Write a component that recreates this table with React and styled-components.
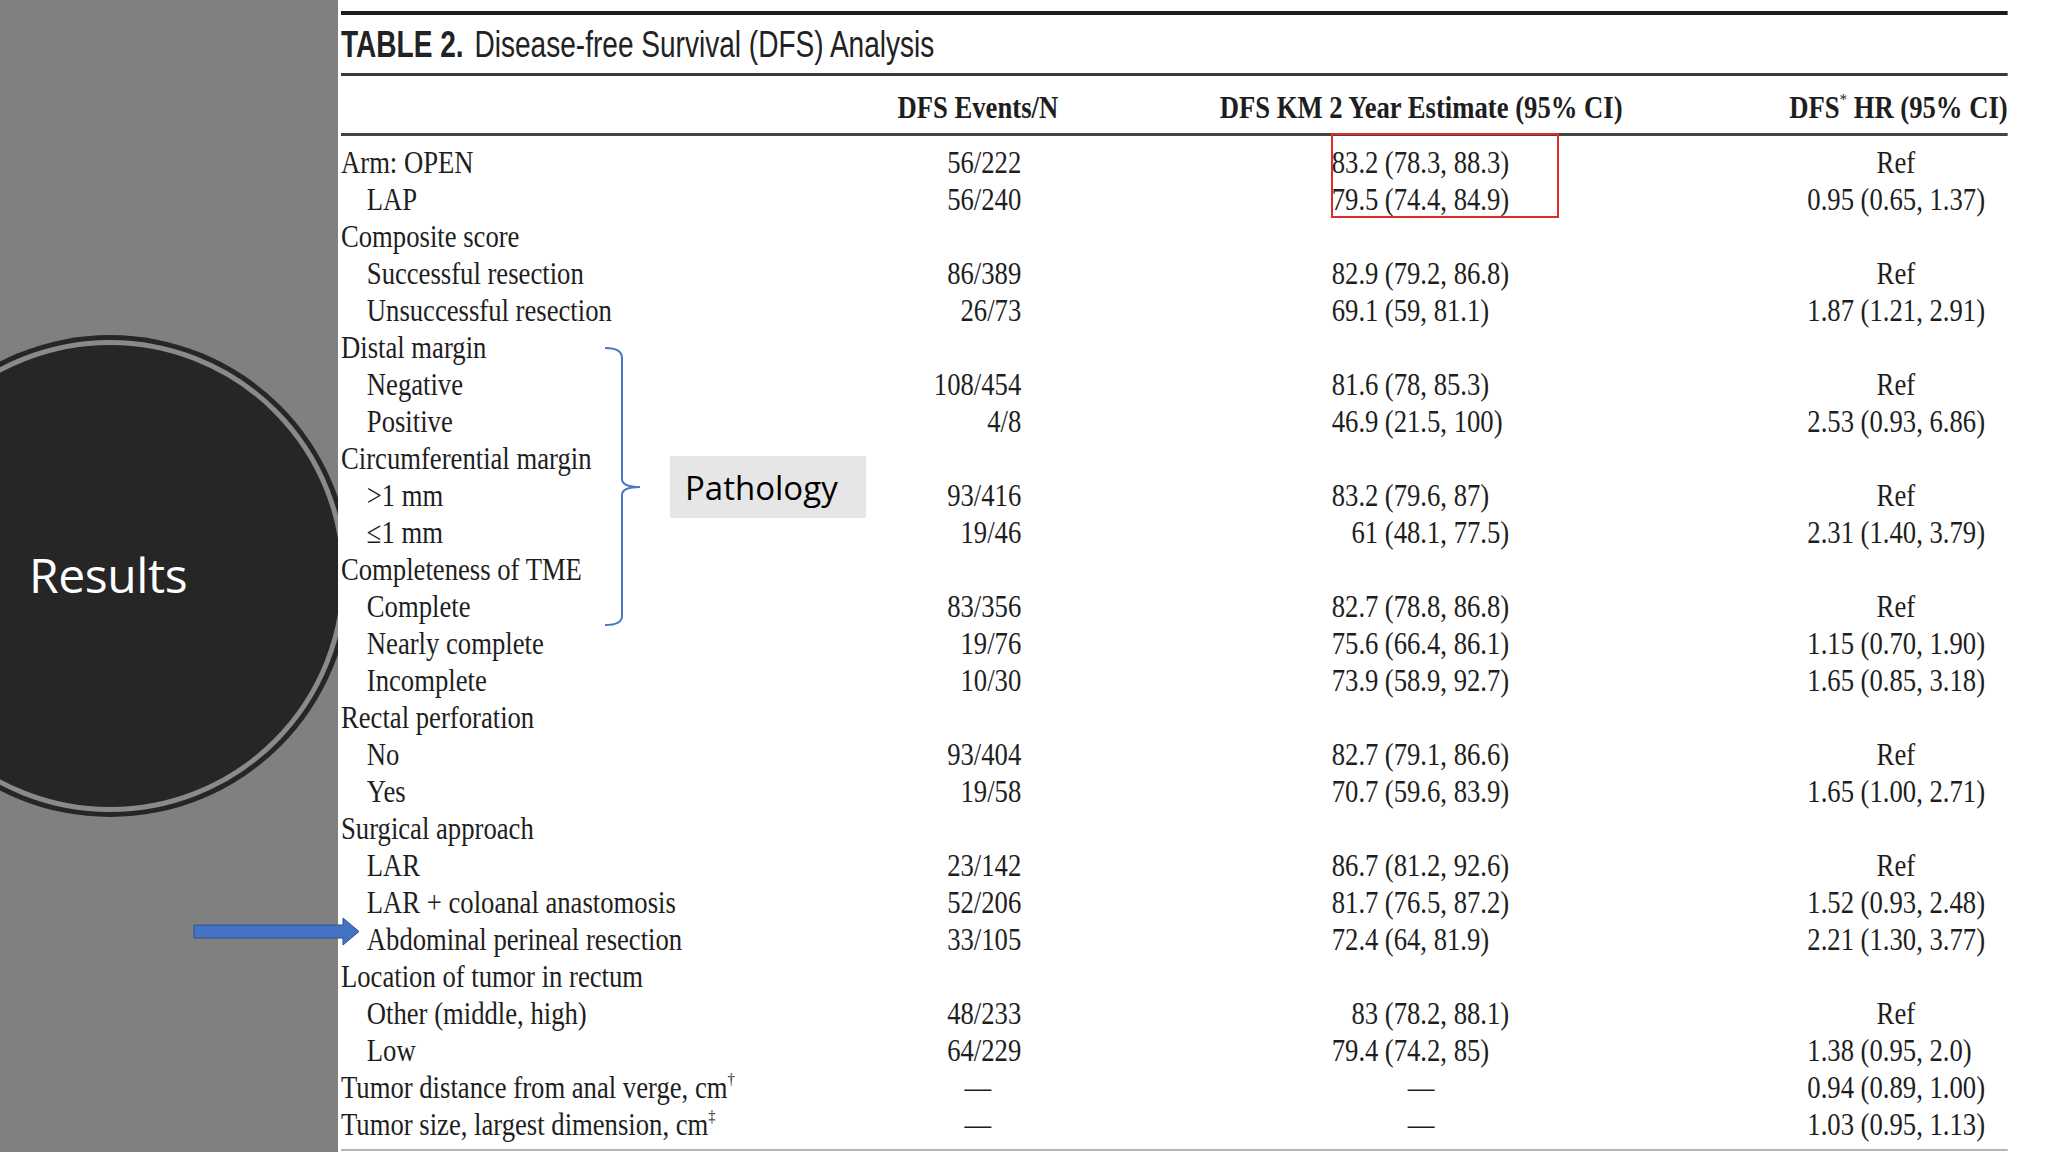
import React from "react";
import styled, { createGlobalStyle } from "styled-components";

// table picture is a squeezed scan: everything inside is laid out at full width and scaled on x
const SQUEEZE = 0.86;

const rows = [
  { label: "Arm: OPEN", events: "56/222", km: ["83.2", "(78.3, 88.3)"], hr: "Ref" },
  { label: "LAP", sub: true, events: "56/240", km: ["79.5", "(74.4, 84.9)"], hr: "0.95 (0.65, 1.37)" },
  { label: "Composite score" },
  { label: "Successful resection", sub: true, events: "86/389", km: ["82.9", "(79.2, 86.8)"], hr: "Ref" },
  { label: "Unsuccessful resection", sub: true, events: "26/73", km: ["69.1", "(59, 81.1)"], hr: "1.87 (1.21, 2.91)" },
  { label: "Distal margin" },
  { label: "Negative", sub: true, events: "108/454", km: ["81.6", "(78, 85.3)"], hr: "Ref" },
  { label: "Positive", sub: true, events: "4/8", km: ["46.9", "(21.5, 100)"], hr: "2.53 (0.93, 6.86)" },
  { label: "Circumferential margin" },
  { label: ">1 mm", sub: true, events: "93/416", km: ["83.2", "(79.6, 87)"], hr: "Ref" },
  { label: "≤1 mm", sub: true, events: "19/46", km: ["61", "(48.1, 77.5)"], hr: "2.31 (1.40, 3.79)" },
  { label: "Completeness of TME" },
  { label: "Complete", sub: true, events: "83/356", km: ["82.7", "(78.8, 86.8)"], hr: "Ref" },
  { label: "Nearly complete", sub: true, events: "19/76", km: ["75.6", "(66.4, 86.1)"], hr: "1.15 (0.70, 1.90)" },
  { label: "Incomplete", sub: true, events: "10/30", km: ["73.9", "(58.9, 92.7)"], hr: "1.65 (0.85, 3.18)" },
  { label: "Rectal perforation" },
  { label: "No", sub: true, events: "93/404", km: ["82.7", "(79.1, 86.6)"], hr: "Ref" },
  { label: "Yes", sub: true, events: "19/58", km: ["70.7", "(59.6, 83.9)"], hr: "1.65 (1.00, 2.71)" },
  { label: "Surgical approach" },
  { label: "LAR", sub: true, events: "23/142", km: ["86.7", "(81.2, 92.6)"], hr: "Ref" },
  { label: "LAR + coloanal anastomosis", sub: true, events: "52/206", km: ["81.7", "(76.5, 87.2)"], hr: "1.52 (0.93, 2.48)" },
  { label: "Abdominal perineal resection", sub: true, events: "33/105", km: ["72.4", "(64, 81.9)"], hr: "2.21 (1.30, 3.77)" },
  { label: "Location of tumor in rectum" },
  { label: "Other (middle, high)", sub: true, events: "48/233", km: ["83", "(78.2, 88.1)"], hr: "Ref" },
  { label: "Low", sub: true, events: "64/229", km: ["79.4", "(74.2, 85)"], hr: "1.38 (0.95, 2.0)" },
  { label: "Tumor distance from anal verge, cm", mark: "†", events: "—", km: "—", hr: "0.94 (0.89, 1.00)" },
  { label: "Tumor size, largest dimension, cm", mark: "‡", events: "—", km: "—", hr: "1.03 (0.95, 1.13)" },
];

export default function App() {
  return (
    <>
      <GlobalStyle />
      <Slide>
        <SidePanel>
          <Badge>
            <BadgeTitle>Results</BadgeTitle>
          </Badge>
        </SidePanel>

        <Sheet>
          <TableScale>
            <Rule $h={4} $color="#1c1c1c" $top={11} />
            <Title>
              <TitleLead>TABLE 2.</TitleLead> Disease-free Survival (DFS) Analysis
            </Title>
            <Rule $h={3} $color="#3a3a3a" $top={8} />
            <HeadRow>
              <HeadCell $col={2} $align="center">DFS Events/N</HeadCell>
              <HeadCell $col={4} $align="center">DFS KM 2 Year Estimate (95% CI)</HeadCell>
              <HeadCell $col={6} $align="right">
                DFS<Sup>*</Sup> HR (95% CI)
              </HeadCell>
            </HeadRow>
            <Rule $h={3} $color="#444" $top={7} />
            <Body>
              {rows.map((r) => (
                <Row key={r.label}>
                  <LabelCell $sub={r.sub}>
                    {r.label}
                    {r.mark && <Sup>{r.mark}</Sup>}
                  </LabelCell>
                  {r.events && <EventsCell $dash={r.events === "—"}>{r.events}</EventsCell>}
                  {r.km &&
                    (Array.isArray(r.km) ? (
                      <KmCell>
                        <Lead>{r.km[0]}</Lead> {r.km[1]}
                      </KmCell>
                    ) : (
                      <KmCell $dash>{r.km}</KmCell>
                    ))}
                  {r.hr && <HrCell $ref={r.hr === "Ref"}>{r.hr}</HrCell>}
                </Row>
              ))}
            </Body>
            <Rule $h={2} $color="#b4b4b4" $top={6} />
          </TableScale>

          <RedBox />
          <Brace width="40" height="282" viewBox="0 0 40 282">
            <path d="M2 2 C12 2 19 4 19 12 L19 133 C19 138 25 141 37 141 C25 141 19 144 19 149 L19 270 C19 277 12 279 2 279" />
          </Brace>
          <Callout>Pathology</Callout>
        </Sheet>

        <Arrow width="170" height="34" viewBox="0 0 170 34">
          <path d="M2 10 H151 V3 L167 16.5 L151 30 V23 H2 Z" />
        </Arrow>
      </Slide>
    </>
  );
}

const GlobalStyle = createGlobalStyle`
  html, body {
    margin: 0;
    padding: 0;
    background: #ffffff;
  }
  body {
    width: 2048px;
    height: 1152px;
    overflow: hidden;
  }
`;

const Slide = styled.div`
  position: relative;
  display: flex;
  width: 2048px;
  height: 1152px;
  overflow: hidden;
`;

const SidePanel = styled.div`
  width: 338px;
  flex-shrink: 0;
  background: #808080;
  display: flex;
  align-items: center;
  overflow: hidden;
`;

const Badge = styled.div`
  box-sizing: border-box;
  flex-shrink: 0;
  width: 472px;
  height: 472px;
  margin-left: -126px;
  padding-left: 150px;
  padding-bottom: 4px;
  border-radius: 50%;
  background: #262626;
  border: 5px solid #8a8a8a;
  box-shadow: 0 0 0 5px #262626;
  display: flex;
  align-items: center;
`;

const BadgeTitle = styled.div`
  font-family: "Open Sans", "Liberation Sans", sans-serif;
  font-size: 48px;
  color: #ffffff;
  letter-spacing: -0.4px;
`;

const Sheet = styled.div`
  position: relative;
  flex: 1;
  min-width: 0;
  background: #ffffff;
  padding-left: 3px;
  overflow: hidden;
`;

const TableScale = styled.div`
  width: 1938px;
  transform: scaleX(${SQUEEZE});
  transform-origin: 0 0;
  color: #1e1e1e;
  font-family: "Liberation Serif", "Times New Roman", serif;
  font-size: 31px;
`;

const Rule = styled.div`
  height: ${(p) => p.$h}px;
  margin-top: ${(p) => p.$top}px;
  background: ${(p) => p.$color};
`;

const Title = styled.div`
  margin-top: 10px;
  height: 40px;
  line-height: 40px;
  font-family: "Liberation Sans", Arial, sans-serif;
  font-size: 36px;
  color: #222;
  white-space: nowrap;
  transform: scaleX(0.906);
  transform-origin: 0 0;
`;

const TitleLead = styled.span`
  font-weight: 700;
  margin-right: 4px;
`;

const grid = `
  display: grid;
  grid-template-columns: 647px 187px 185px 474px 185px 260px;
  height: 37px;
  line-height: 37px;
  white-space: nowrap;
`;

const HeadRow = styled.div`
  ${grid}
  margin-top: 13px;
  font-weight: 700;
`;

const HeadCell = styled.div`
  grid-column: ${(p) => p.$col};
  text-align: ${(p) => p.$align};
`;

const Body = styled.div`
  margin-top: 8px;
`;

const Row = styled.div`
  ${grid}
`;

const LabelCell = styled.div`
  grid-column: 1;
  padding-left: ${(p) => (p.$sub ? 30 : 0)}px;
`;

const EventsCell = styled.div`
  grid-column: 2;
  text-align: ${(p) => (p.$dash ? "center" : "right")};
  padding-right: ${(p) => (p.$dash ? 0 : 43)}px;
`;

const KmCell = styled.div`
  grid-column: 4;
  text-align: ${(p) => (p.$dash ? "center" : "left")};
  padding-left: ${(p) => (p.$dash ? 0 : 133)}px;
`;

const Lead = styled.span`
  display: inline-block;
  width: 54px;
  text-align: right;
`;

const HrCell = styled.div`
  grid-column: 6;
  text-align: ${(p) => (p.$ref ? "center" : "left")};
  padding-left: ${(p) => (p.$ref ? 0 : 27)}px;
`;

const Sup = styled.sup`
  font-size: 0.55em;
  line-height: 0;
  vertical-align: 0.75em;
  font-weight: 400;
`;

const RedBox = styled.div`
  position: absolute;
  left: 993px;
  top: 133px;
  width: 228px;
  height: 85px;
  box-sizing: border-box;
  border: 2px solid #e22a2a;
`;

const Brace = styled.svg`
  position: absolute;
  left: 265px;
  top: 346px;
  fill: none;
  stroke: #4a76c6;
  stroke-width: 2;
`;

const Callout = styled.div`
  position: absolute;
  left: 332px;
  top: 456px;
  width: 196px;
  height: 62px;
  box-sizing: border-box;
  padding-left: 15px;
  display: flex;
  align-items: center;
  background: #e7e6e6;
  color: #000;
  font-family: "Open Sans", "Liberation Sans", sans-serif;
  font-size: 33px;
`;

const Arrow = styled.svg`
  position: absolute;
  left: 192px;
  top: 915px;
  fill: #4472c4;
  stroke: #2f528f;
  stroke-width: 1;
`;
